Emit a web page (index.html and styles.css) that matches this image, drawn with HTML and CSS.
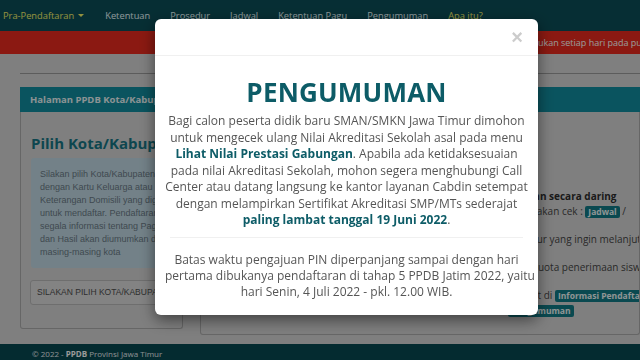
FILE: index.html
```html
<!DOCTYPE html>
<html lang="id">
<head>
<meta charset="utf-8">
<title>PPDB Jawa Timur</title>
<link rel="stylesheet" href="styles.css">
</head>
<body>
<nav class="topnav">
  <a class="nav-item first active">Pra-Pendaftaran <span class="caret"></span></a>
  <a class="nav-item">Ketentuan</a>
  <a class="nav-item">Prosedur</a>
  <a class="nav-item">Jadwal</a>
  <a class="nav-item">Ketentuan Pagu</a>
  <a class="nav-item">Pengumuman</a>
  <a class="nav-item active">Apa itu?</a>
</nav>
<div class="ticker"><span class="ticker-text">Pengajuan PIN dapat dilakukan setiap hari pada pukul 08.00 - 15.00 WIB</span></div>
<main class="page">
  <hr class="rule">
  <div class="band">Halaman PPDB Kota/Kabupaten</div>
  <div class="cols">
    <section class="panel panel-left">
      <h2 class="panel-title">Pilih Kota/Kabupaten</h2>
      <div class="info-box">Silakan pilih Kota/Kabupaten<br>dengan Kartu Keluarga atau<br>Keterangan Domisili yang digunakan<br>untuk mendaftar. Pendaftaran<br>segala informasi tentang Pagu<br>dan Hasil akan diumumkan di<br>masing-masing kota</div>
      <div class="select-box">SILAKAN PILIH KOTA/KABUPATEN</div>
    </section>
    <section class="panel panel-right">
      <div class="right-content">
        <p class="para"><b>Pendaftaran PPDB dilakukan secara daring</b><br>Untuk jadwal pelaksanaan silakan cek : <span class="badge">Jadwal</span> /</p>
        <p class="para">Bagi lulusan SMP di Jawa Timur yang ingin melanjutkan ke jenjang SMA/SMK</p>
        <p class="para">Informasi mengenai jumlah kuota penerimaan siswa setiap sekolah</p>
        <p class="para">Untuk info lanjut dapat dilihat di <span class="badge">Informasi Pendaftaran</span><br>serta melalui halaman <span class="badge">Pengumuman</span></p>
      </div>
    </section>
  </div>
</main>
<footer class="footer">© 2022 - <b>PPDB</b> Provinsi Jawa Timur</footer>

<div class="backdrop"></div>
<div class="modal">
  <div class="modal-header"><span class="close">×</span></div>
  <div class="modal-body">
    <h1 class="modal-title">PENGUMUMAN</h1>
    <p class="notice">Bagi calon peserta didik baru SMAN/SMKN Jawa Timur dimohon<br>untuk mengecek ulang Nilai Akreditasi Sekolah asal pada menu<br><b class="hl">Lihat Nilai Prestasi Gabungan</b>. Apabila ada ketidaksesuaian<br>pada nilai Akreditasi Sekolah, mohon segera menghubungi Call<br>Center atau datang langsung ke kantor layanan Cabdin setempat<br>dengan melampirkan Sertifikat Akreditasi SMP/MTs sederajat<br><b class="hl">paling lambat tanggal 19 Juni 2022</b>.</p>
    <hr class="modal-rule">
    <p class="notice notice-2">Batas waktu pengajuan PIN diperpanjang sampai dengan hari<br>pertama dibukanya pendaftaran di tahap 5 PPDB Jatim 2022, yaitu<br>hari Senin, 4 Juli 2022 - pkl. 12.00 WIB.</p>
  </div>
</div>
</body>
</html>
```
FILE: styles.css
```css
* { box-sizing: border-box; }
html, body { margin: 0; padding: 0; }
body {
  width: 640px;
  height: 360px;
  overflow: hidden;
  background: #d4d4d4;
  font-family: "Open Sans", "DejaVu Sans", sans-serif;
  color: #464646;
}

.topnav {
  height: 31px;
  background: #0b4d57;
  display: flex;
  align-items: center;
  font-size: 9.3px;
  white-space: nowrap;
}
.nav-item {
  padding: 0 10px;
  color: #eafcff;
  display: flex;
  align-items: center;
}
.nav-item.first { padding-left: 3px; padding-right: 11px; }
.nav-item.active { color: #f4f26a; }
.caret {
  display: inline-block;
  width: 0; height: 0;
  margin-left: 4px;
  border-top: 3px solid currentColor;
  border-left: 3px solid transparent;
  border-right: 3px solid transparent;
}

.ticker {
  height: 23px;
  background: #e82b1e;
  color: #ffffff;
  font-size: 9px;
  line-height: 23px;
  white-space: nowrap;
  overflow: hidden;
}
.ticker-text { display: inline-block; padding-left: 428px; }

.page {
  height: 290px;
  padding: 19px 0 0 20px;
}
.rule {
  margin: 0;
  border: 0;
  border-top: 1px solid #999999;
}
.band {
  margin-top: 13px;
  height: 25px;
  line-height: 25px;
  background: #118c9e;
  color: #eaf6f7;
  font-weight: 700;
  font-size: 9.5px;
  padding-left: 10px;
  white-space: nowrap;
}
.cols {
  display: flex;
  gap: 17px;
  align-items: flex-start;
}
.panel {
  border: 1px solid #ababab;
  border-top: 0;
  border-radius: 0 0 3px 3px;
}
.panel-left {
  width: 163px;
  height: 217px;
  padding: 21px 10px 0 10px;
}
.panel-title {
  margin: 0 0 5px 0;
  font-size: 15px;
  line-height: 20px;
  font-weight: 700;
  color: #177584;
  white-space: nowrap;
}
.info-box {
  background: #c0d8e3;
  color: #6a7a86;
  font-family: "Liberation Sans", Arial, sans-serif;
  font-size: 9px;
  line-height: 13px;
  padding: 10px 9px 9px 9px;
  border-radius: 3px;
  white-space: nowrap;
  overflow: hidden;
  margin-bottom: 12px;
}
.select-box {
  height: 25px;
  margin-left: -1px;
  border: 1px solid #b8b8b8;
  border-radius: 3px;
  background: #dadada;
  color: #4e4e4e;
  font-family: "Liberation Sans", Arial, sans-serif;
  font-size: 8.5px;
  line-height: 23px;
  padding-left: 6px;
  white-space: nowrap;
  overflow: hidden;
}

.panel-right {
  flex: 1;
  height: 223px;
  min-width: 0;
  padding-top: 77px;
  padding-left: 201px;
  overflow: hidden;
}
.right-content {
  font-size: 10px;
  line-height: 15px;
  white-space: nowrap;
  color: #464646;
}
.right-content b { color: #2c2c2c; }
.para { margin: 0 0 13px 0; }
.badge {
  display: inline-block;
  background: #127b86;
  color: #eef8f8;
  font-size: 8.5px;
  font-weight: 700;
  line-height: 12px;
  padding: 0 3px;
  border-radius: 2px;
}

.footer {
  height: 30px;
  background: #074850;
  color: #e6eef0;
  font-size: 8px;
  line-height: 10px;
  padding: 5px 32px;
  white-space: nowrap;
}
.footer b { color: #ffffff; }

.backdrop {
  position: fixed;
  inset: 0;
  background: rgba(0, 0, 0, 0.4);
}
.modal {
  position: fixed;
  left: 155px;
  top: 19px;
  width: 383px;
  background: #ffffff;
  border-radius: 6px;
  box-shadow: 0 5px 15px rgba(0, 0, 0, 0.5);
  overflow: hidden;
}
.modal-header {
  height: 37px;
  border-bottom: 1px solid #f0f0f0;
  display: flex;
  align-items: center;
  justify-content: flex-end;
  padding-right: 15px;
}
.close {
  font-family: "Liberation Sans", Arial, sans-serif;
  font-size: 20px;
  font-weight: 700;
  line-height: 20px;
  color: #cccccc;
}
.modal-body {
  padding: 21px 10px 15px 10px;
  text-align: center;
}
.modal-title {
  margin: 0;
  font-size: 26px;
  line-height: 30px;
  font-weight: 700;
  color: #0d5c67;
  letter-spacing: 0.2px;
}
.notice {
  margin: 6px 0 0 0;
  font-size: 12px;
  line-height: 16.5px;
  color: #555555;
  white-space: nowrap;
}
.hl { color: #0d5c67; font-weight: 700; }
.modal-rule {
  margin: 8px 5px 0 5px;
  border: 0;
  border-top: 1px solid #f0f0f0;
}
.notice-2 {
  margin-top: 14px;
  line-height: 16px;
}
```
